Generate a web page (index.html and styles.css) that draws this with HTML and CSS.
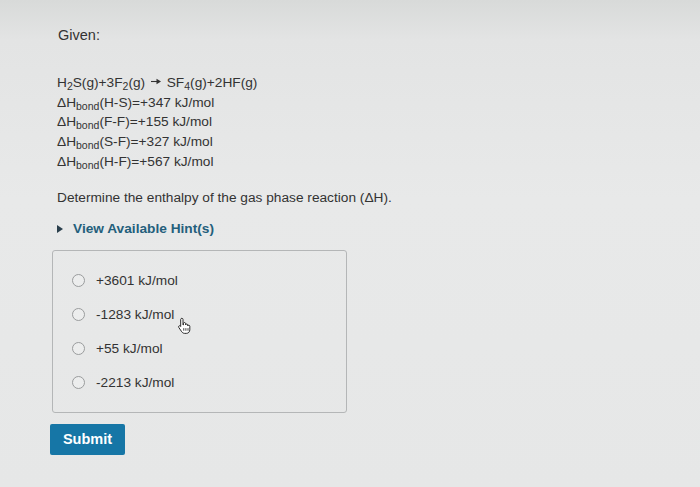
FILE: index.html
```html
<!DOCTYPE html>
<html>
<head>
<meta charset="utf-8">
<link rel="stylesheet" href="styles.css">
</head>
<body>
<div class="page">
  <p class="given">Given:</p>
  <div class="data">
    <div class="line">H<sub>2</sub>S(g)+3F<sub>2</sub>(g) <svg class="arrow" width="10" height="7" viewBox="0 0 10 7"><path d="M0 3.5h6.5" stroke="#333" stroke-width="1.1"/><path d="M5.5 0.8L10 3.5 5.5 6.2z" fill="#333"/></svg> SF<sub>4</sub>(g)+2HF(g)</div>
    <div class="line">ΔH<sub>bond</sub>(H-S)=+347 kJ/mol</div>
    <div class="line">ΔH<sub>bond</sub>(F-F)=+155 kJ/mol</div>
    <div class="line">ΔH<sub>bond</sub>(S-F)=+327 kJ/mol</div>
    <div class="line">ΔH<sub>bond</sub>(H-F)=+567 kJ/mol</div>
  </div>
  <p class="question">Determine the enthalpy of the gas phase reaction (ΔH).</p>
  <div class="hint"><span class="tri"></span>View Available Hint(s)</div>
  <div class="choices">
    <label class="choice"><span class="radio"></span>+3601 kJ/mol</label>
    <label class="choice"><span class="radio"></span>-1283 kJ/mol<svg class="cursor" width="15" height="17" viewBox="0 0 14 16"><path d="M4.5 1.2c.7 0 1.1.5 1.1 1.1v5.2l.4-.1V6.2c0-.6.5-1 1-1s1 .4 1 1v1.2c.1-.5.5-.8 1-.8s1 .4 1 1v.8c.1-.4.5-.7 1-.7.6 0 1 .4 1 1v3.3c0 1.9-1.3 3.4-3.3 3.4H7.1c-1.2 0-2-.6-2.7-1.5L1.6 9.8c-.4-.5-.3-1.1.2-1.4.5-.3 1-.2 1.4.2l.2.3V2.3c0-.6.5-1.1 1.1-1.1z" fill="#fff" stroke="#222" stroke-width="0.9"/><path d="M6.3 10.5v2.4M8.3 10.5v2.4M10.3 10.5v2.4" stroke="#222" stroke-width="0.8"/></svg></label>
    <label class="choice"><span class="radio"></span>+55 kJ/mol</label>
    <label class="choice"><span class="radio"></span>-2213 kJ/mol</label>
  </div>
  <button class="submit">Submit</button>
</div>
</body>
</html>
```
FILE: styles.css
```css
html, body {
  margin: 0;
  padding: 0;
}
body {
  width: 700px;
  height: 487px;
  overflow: hidden;
  background: linear-gradient(180deg, #d8dad9 0px, #e3e4e4 40px, #e8e9e9 200px, #e6e7e7 487px);
  font-family: "Liberation Sans", Arial, sans-serif;
  color: #333;
  font-size: 13.7px;
}
.page {
  padding: 27px 0 0 57px;
}
.given {
  margin: 0 0 0 1px;
  line-height: 16px;
  font-size: 14.5px;
}
.data {
  margin-top: 30px;
}
.line {
  line-height: 19.7px;
  white-space: nowrap;
}
sub {
  font-size: 10.5px;
  line-height: 0;
  vertical-align: -3px;
}
.arrow {
  margin: 0 2px;
  vertical-align: 2px;
}
.question {
  margin: 18px 0 0;
  line-height: 16px;
}
.hint {
  margin-top: 15px;
  display: flex;
  align-items: center;
  font-weight: bold;
  color: #245f7c;
  line-height: 16px;
}
.tri {
  width: 0;
  height: 0;
  border-top: 4.5px solid transparent;
  border-bottom: 4.5px solid transparent;
  border-left: 6px solid #2a3f4c;
  margin-right: 10px;
}
.choices {
  margin: 13px 0 0 -5px;
  width: 295px;
  height: 163px;
  border: 1px solid #b4b6b7;
  border-radius: 3px;
  box-sizing: border-box;
  padding: 22px 0 0 19px;
  display: flex;
  flex-direction: column;
  gap: 18px;
}
.choice {
  display: flex;
  align-items: center;
  line-height: 16px;
  position: relative;
}
.radio {
  width: 13px;
  height: 13px;
  border: 1px solid #9a9c9d;
  border-radius: 50%;
  background: #eceded;
  margin-right: 11px;
  box-sizing: border-box;
}
.cursor {
  position: absolute;
  left: 105px;
  top: 10px;
}
.submit {
  margin: 11px 0 0 -7px;
  width: 75px;
  height: 31px;
  background: #1676a6;
  color: #fff;
  border: none;
  border-radius: 2px;
  font-family: "Liberation Sans", Arial, sans-serif;
  font-weight: bold;
  font-size: 14.5px;
  padding: 0;
}
```
